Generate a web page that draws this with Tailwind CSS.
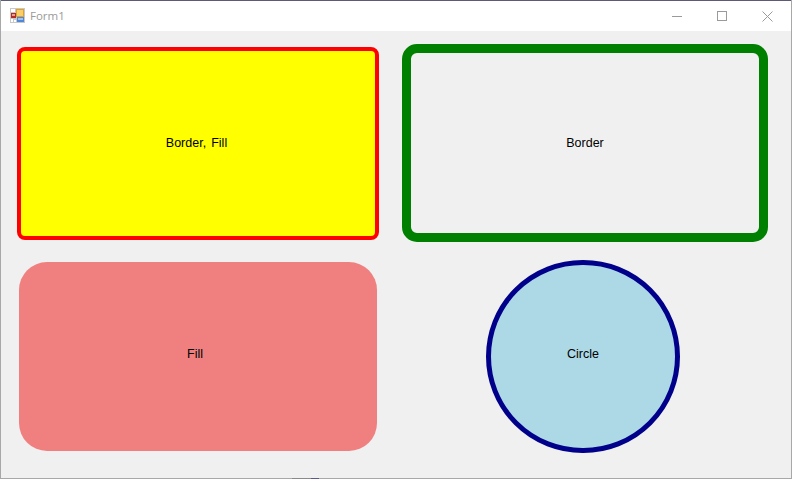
<!DOCTYPE html>
<html>
<head>
<script src="https://cdn.jsdelivr.net/npm/@tailwindcss/browser@4"></script>
</head>
<body class="m-0 bg-[#f0f0f0]">
<div class="w-[792px] h-[479px] overflow-hidden flex flex-col border-x border-[#a8a8a8] bg-[#f0f0f0] font-['Liberation_Sans',sans-serif] text-[12.5px] text-black">
  <div class="h-px -mx-px shrink-0 bg-[#5b5b78]"></div>
  <div class="h-[30px] shrink-0 -ml-px border-l border-[#b8a67c] bg-white flex items-center">
    <svg class="ml-[9px] w-[15px] h-[15px] shrink-0 -mt-px" viewBox="0 0 15 15" shape-rendering="crispEdges">
      <rect x="0" y="0" width="15" height="15" fill="#c8c8c8"/>
      <rect x="1" y="1" width="4" height="3" fill="#fff"/>
      <rect x="1" y="11" width="2" height="3" fill="#fff"/>
      <rect x="4" y="12" width="2" height="2" fill="#fff"/>
      <rect x="1" y="5" width="5" height="5" fill="#b32b22"/>
      <rect x="2" y="6" width="3" height="2" fill="#e8a090"/>
      <rect x="6" y="1" width="8" height="8" fill="#dfa02c"/>
      <rect x="7" y="2" width="6" height="6" fill="#f7cf6b"/>
      <rect x="7" y="9" width="7" height="5" fill="#4f86d8"/>
      <rect x="8" y="10" width="5" height="2" fill="#9fc2f0"/>
    </svg>
    <span class="ml-[5px] font-['Open_Sans',sans-serif] text-[11.5px] text-[#9a9a9a]">Form1</span>
    <div class="ml-auto flex items-center">
      <svg class="w-[10px] h-[10px]" viewBox="0 0 10 10" shape-rendering="crispEdges"><rect x="0" y="5" width="10" height="1" fill="#9a9a9a"/></svg>
      <svg class="ml-[35px] w-[10px] h-[10px]" viewBox="0 0 10 10" shape-rendering="crispEdges"><rect x="0.5" y="0.5" width="9" height="9" fill="none" stroke="#9a9a9a"/></svg>
      <svg class="ml-[35px] mr-[18px] w-[11px] h-[11px]" viewBox="0 0 11 11"><path d="M0.5 0.5 L10.5 10.5 M10.5 0.5 L0.5 10.5" stroke="#9a9a9a" stroke-width="1" fill="none"/></svg>
    </div>
  </div>
  <div class="flex-1 pt-[13px] flex flex-col">
    <div class="flex items-start h-[198px]">
      <div class="ml-[16px] mt-[3px] w-[362px] h-[193px] rounded-[8px] border-[4px] border-[#ff0000] bg-[#ffff00] flex items-center justify-center pb-px pr-[3px] [word-spacing:1.6px]">Border, Fill</div>
      <div class="ml-[23px] w-[366px] h-[198px] rounded-[15px] border-[9px] border-[#008000] flex items-center justify-center">Border</div>
    </div>
    <div class="flex items-start mt-[18px]">
      <div class="ml-[18px] mt-[2px] w-[358px] h-[189px] rounded-[28px] bg-[#f08080] flex items-center justify-center pr-[6px] pb-[5px]">Fill</div>
      <div class="ml-[109px] w-[194px] h-[193px] rounded-full border-[5px] border-[#00008b] bg-[#add8e6] flex items-center justify-center pb-[5px]">Circle</div>
    </div>
  </div>
  <div class="h-px -mx-px shrink-0 flex bg-[#a8a8a8]">
    <div class="ml-[292px] w-[19px] bg-[#8a8a8a]"></div>
    <div class="w-[8px] bg-[#5b5b8a]"></div>
  </div>
</div>
</body>
</html>
